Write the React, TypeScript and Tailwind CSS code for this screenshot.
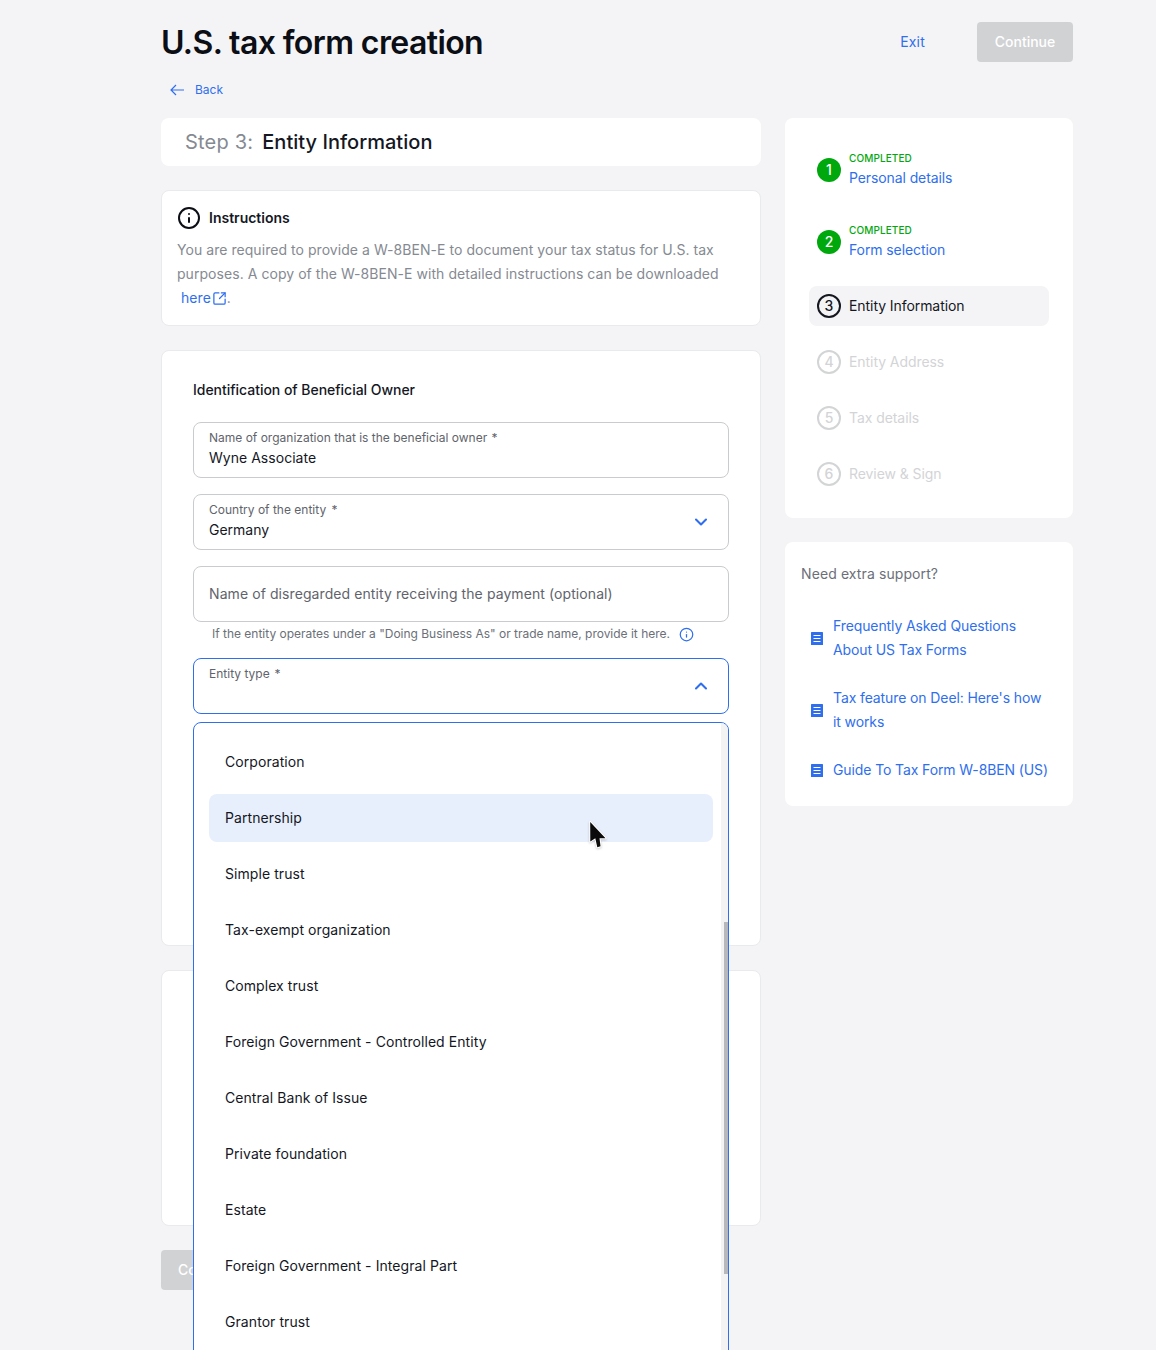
import { ChevronDown, ChevronUp, Info, SquareArrowOutUpRight } from "lucide-react";

const entityTypes = [
  "Corporation",
  "Partnership",
  "Simple trust",
  "Tax-exempt organization",
  "Complex trust",
  "Foreign Government - Controlled Entity",
  "Central Bank of Issue",
  "Private foundation",
  "Estate",
  "Foreign Government - Integral Part",
  "Grantor trust",
];

function DocIcon() {
  return (
    <svg width="12" height="13" viewBox="0 0 12 13" className="shrink-0">
      <rect width="12" height="13" rx="0.5" fill="#2f6fed" />
      <path d="M2.5 3.5h7M2.5 6.5h7M2.5 9.5h7" stroke="#fff" strokeWidth="1" />
    </svg>
  );
}

function Step({ n, label, state }: { n: number; label: string; state: "done" | "active" | "todo" }) {
  if (state === "done") {
    return (
      <div className="flex items-center gap-2 px-2 h-12">
        <div className="w-6 h-6 rounded-full bg-[#00a80e] text-white text-sm font-medium flex items-center justify-center">{n}</div>
        <div>
          <div className="text-[10px] leading-4 font-medium text-[#00a80e] tracking-[0.01em]">COMPLETED</div>
          <div className="text-sm leading-6 text-[#2f6fed] tracking-[-0.1px]">{label}</div>
        </div>
      </div>
    );
  }
  const active = state === "active";
  return (
    <div className={`flex items-center gap-2 px-2 h-10 rounded-lg ${active ? "bg-[#f4f4f6] text-[#14171f]" : "text-[#d3d4d6]"}`}>
      <div className={`w-6 h-6 rounded-full border-2 text-sm font-medium flex items-center justify-center ${active ? "border-[#14171f]" : "border-[#d3d4d6]"}`}>{n}</div>
      <span className="text-sm tracking-[-0.07px]">{label}</span>
    </div>
  );
}

export default function App() {
  return (
    <div className="h-[1350px] overflow-hidden bg-[#f4f4f6] font-['Inter',sans-serif]">
      <div className="w-[912px] ml-[161px]">
        {/* Header */}
        <div className="flex items-center justify-between pt-[22px] h-[62px]">
          <h1 className="text-[32px] leading-10 font-semibold text-[#0b0e14] tracking-[-0.6px] mt-[2px]">U.S. tax form creation</h1>
          <div className="flex items-center gap-[52px]">
            <a className="text-sm text-[#2f6fed] tracking-[0.2px]">Exit</a>
            <div className="w-24 h-10 rounded bg-[#d1d2d4] text-white text-sm font-medium flex items-center justify-center">Continue</div>
          </div>
        </div>
        <a className="flex items-center gap-[11px] h-4 mt-5 ml-[9px] text-xs text-[#2f6fed]">
          <svg width="14" height="12" viewBox="0 0 14 12" fill="none" stroke="currentColor" strokeWidth="1.2">
            <path d="M14 6H1M6 1 1 6l5 5" />
          </svg>
          Back
        </a>

        <div className="flex gap-6 mt-5">
          {/* Main column */}
          <div className="w-[600px] relative">
            <div className="h-12 bg-white rounded-lg flex items-center px-6 text-xl gap-[9px]">
              <span className="text-[#858a92] tracking-[0.2px]">Step 3:</span>
              <span className="text-[#14171f] font-medium tracking-[0.03px]">Entity Information</span>
            </div>

            <div className="mt-6 h-[136px] bg-white rounded-lg border border-[#e9eaec] px-[15px] pt-[15px]">
              <div className="flex items-center gap-2 h-6">
                <Info size={24} strokeWidth={2} className="text-[#0b0e14]" />
                <span className="text-sm font-semibold text-[#14171f]">Instructions</span>
              </div>
              <p className="text-sm leading-6 text-[#858a92] mt-[8px] w-[560px] tracking-[0.05px]">
                You are required to provide a W-8BEN-E to document your tax status for U.S. tax purposes. A copy of the W-8BEN-E with detailed instructions can be downloaded{" "}
                <span className="ml-1 inline-flex items-center text-[#2f6fed]">
                  here
                  <SquareArrowOutUpRight size={15} strokeWidth={2} className="ml-[1px]" />
                </span>
                .
              </p>
            </div>

            <div className="mt-6 h-[596px] bg-white rounded-lg border border-[#e9eaec] px-[31px] pt-[31px]">
              <h2 className="text-sm leading-4 font-medium text-[#14171f] h-4 tracking-[-0.03px]">Identification of Beneficial Owner</h2>
              <div className="mt-6 h-14 rounded-lg border border-[#c9cbce] px-[15px] pt-[7px]">
                <div className="text-xs leading-4 text-[#5f646c]">Name of organization that is the beneficial owner <span className="ml-[1px]">*</span></div>
                <div className="text-sm leading-6 text-[#14171f] tracking-[0.03px]">Wyne Associate</div>
              </div>
              <div className="mt-4 h-14 rounded-lg border border-[#c9cbce] px-[15px] pt-[7px] flex justify-between">
                <div>
                  <div className="text-xs leading-4 text-[#5f646c]">Country of the entity <span className="ml-[2px]">*</span></div>
                  <div className="text-sm leading-6 text-[#14171f]">Germany</div>
                </div>
                <ChevronDown size={20} strokeWidth={2.5} className="text-[#2f6fed] mt-[10px] mr-[2px]" />
              </div>
              <div className="mt-4 h-14 rounded-lg border border-[#c9cbce] px-[15px] flex items-center text-sm text-[#5f646c] tracking-[0.085px]">
                Name of disregarded entity receiving the payment (optional)
              </div>
              <div className="flex items-center h-6 pl-[19px] text-xs text-[#6b7078] tracking-[-0.01px]">
                If the entity operates under a "Doing Business As" or trade name, provide it here.
                <Info size={15} strokeWidth={2} className="text-[#2f6fed] ml-[9px]" />
              </div>
              <div className="mt-3 h-14 rounded-lg border border-[#2f6fed] px-[15px] pt-[7px] flex justify-between">
                <div className="text-xs leading-4 text-[#5f646c]">Entity type <span className="ml-[1.5px]">*</span></div>
                <ChevronUp size={20} strokeWidth={2.5} className="text-[#2f6fed] mt-[10px] mr-[2px]" />
              </div>
            </div>

            <div className="mt-6 h-[256px] bg-white rounded-lg border border-[#e9eaec]" />
            <div className="mt-6 w-24 h-10 rounded bg-[#d1d2d4] text-white text-sm font-medium flex items-center pl-[17px]">Continue</div>

            {/* Open dropdown */}
            <div className="absolute left-8 top-[604px] w-[536px] h-[700px] bg-white border border-[#2f6fed] rounded-t-lg overflow-hidden flex">
              <div className="flex-1 pt-[15px] pl-[15px] pr-2">
                {entityTypes.map((t, i) => (
                  <div key={t} className={`h-12 mb-2 px-4 flex items-center rounded-lg text-sm text-[#14171f] tracking-[0.07px] ${i === 1 ? "bg-[#e8effc]" : ""}`}>
                    {t}
                  </div>
                ))}
              </div>
              <div className="w-[7px] bg-[#f3f3f4] flex flex-col items-end">
                <div className="h-[199px] shrink-0" />
                <div className="h-[352px] w-[4px] shrink-0 bg-[#b6b8bb]" />
              </div>
            </div>

            {/* Cursor */}
            <svg width="24" height="32" viewBox="0 0 24 32" className="absolute left-[426px] top-[701px] drop-shadow-[0_1px_1px_rgba(0,0,0,0.2)]">
              <path d="M3.2 3 18.5 19.2H12.5l1 8-3.2 1-2-9-5 3.2z" fill="#0b0b0b" stroke="#fff" strokeWidth="2" strokeLinejoin="round" paintOrder="stroke" />
            </svg>
          </div>

          {/* Side column */}
          <div className="w-[288px]">
            <div className="h-[400px] bg-white rounded-lg px-6 pt-7 flex flex-col">
              <Step n={1} label="Personal details" state="done" />
              <div className="h-6 shrink-0" />
              <Step n={2} label="Form selection" state="done" />
              <div className="h-5 shrink-0" />
              <Step n={3} label="Entity Information" state="active" />
              <div className="h-4 shrink-0" />
              <Step n={4} label="Entity Address" state="todo" />
              <div className="h-4 shrink-0" />
              <Step n={5} label="Tax details" state="todo" />
              <div className="h-4 shrink-0" />
              <Step n={6} label="Review & Sign" state="todo" />
            </div>
            <div className="mt-6 h-[264px] bg-white rounded-lg px-4 pt-5">
              <div className="text-sm leading-6 text-[#6b7078] tracking-[0.1px]">Need extra support?</div>
              <div className="mt-7 text-sm leading-6 text-[#2f6fed] tracking-[-0.11px] pl-[10px] flex flex-col gap-6">
                <div className="flex items-center gap-[10px]"><DocIcon /><span>Frequently Asked Questions<br />About US Tax Forms</span></div>
                <div className="flex items-center gap-[10px]"><DocIcon /><span>Tax feature on Deel: Here's how<br />it works</span></div>
                <div className="flex items-center gap-[10px]"><DocIcon /><span className="whitespace-nowrap">Guide To Tax Form W-8BEN (US)</span></div>
              </div>
            </div>
          </div>
        </div>
      </div>
    </div>
  );
}
